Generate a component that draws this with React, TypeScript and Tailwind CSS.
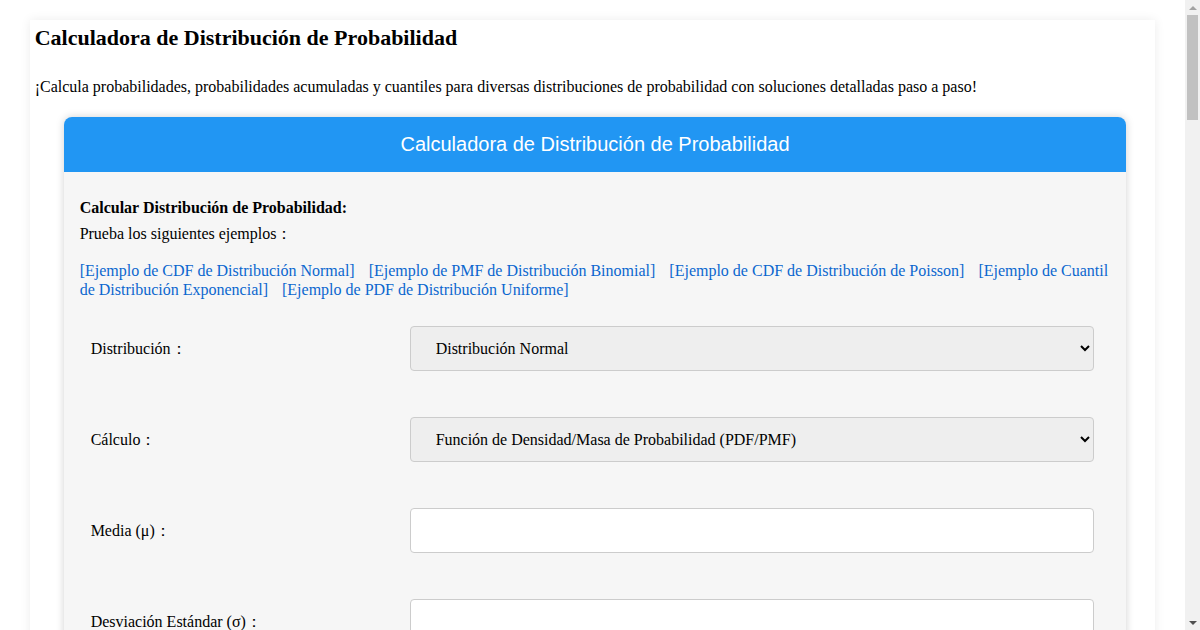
const examples = [
	"[Ejemplo de CDF de Distribución Normal]",
	"[Ejemplo de PMF de Distribución Binomial]",
	"[Ejemplo de CDF de Distribución de Poisson]",
	"[Ejemplo de Cuantil de Distribución Exponencial]",
	"[Ejemplo de PDF de Distribución Uniforme]",
];

const FieldRow = ({ label, children }: { label: string; children: React.ReactNode }) => {
	return (
		<div className="flex items-center">
			<label className="w-[330px] shrink-0 pl-[11px]">{label}</label>
			<div className="flex-1 mr-4">{children}</div>
		</div>
	);
};

const selectCls =
	"w-full h-[45px] pl-[21px] pr-1 bg-[#eeeeee] border border-[#cccccc] rounded-[4px] text-[16px] text-black outline-none";
const inputCls = "w-full h-[45px] px-3 bg-white border border-[#cccccc] rounded-[4px] text-[16px] outline-none";

const Scrollbar = () => {
	return (
		<div className="w-[15px] shrink-0 h-full bg-[#f1f1f1] flex flex-col items-center">
			<div className="h-[15px] flex items-center justify-center">
				<div className="w-0 h-0 border-l-[4px] border-r-[4px] border-b-[4px] border-l-transparent border-r-transparent border-b-[#a3a3a3]" />
			</div>
			<div className="w-[11px] h-[105px] bg-[#c1c1c1]" />
			<div className="flex-1" />
			<div className="h-[15px] flex items-center justify-center">
				<div className="w-0 h-0 border-l-[4px] border-r-[4px] border-t-[4px] border-l-transparent border-r-transparent border-t-[#505050]" />
			</div>
		</div>
	);
};

export default function App() {
	return (
		<div className="h-[630px] flex overflow-hidden bg-white font-['Liberation_Serif','Times_New_Roman',serif] text-[16px] leading-[1.15] text-black">
			<div className="flex-1 overflow-hidden">
				<div className="w-[95%] mx-auto mt-5 px-[5px] pt-[5px] pb-10 bg-white shadow-[0_0_10px_rgba(0,0,0,0.08)]">
					<h2 className="text-[22px] font-bold leading-[1.15]">Calculadora de Distribución de Probabilidad</h2>
					<p className="mt-[28px]">
						¡Calcula probabilidades, probabilidades acumuladas y cuantiles para diversas distribuciones de probabilidad con soluciones detalladas paso a paso!
					</p>

					<div className="mt-[20px] ml-[29px] mr-[24px] rounded-[8px] bg-[#f6f6f6] shadow-[0_0_8px_rgba(0,0,0,0.18)]">
						<div className="h-[55px] flex items-center justify-center rounded-t-[8px] bg-[#2196f3] text-white text-[20px] font-['Liberation_Sans',Arial,sans-serif]">
							Calculadora de Distribución de Probabilidad
						</div>

						<div className="pt-[27px] px-4 pb-10">
							<div className="font-bold">Calcular Distribución de Probabilidad:</div>
							<div className="mt-[8px]">Prueba los siguientes ejemplos：</div>
							<div className="mt-[18px] leading-[19px]">
								{examples.map((ex) => (
									<span key={ex}>
										<span className="text-[#0b67cf] mr-[10px] cursor-pointer">{ex}</span>{" "}
									</span>
								))}
							</div>

							<div className="mt-[27px] flex flex-col gap-[46px]">
								<FieldRow label="Distribución：">
									<select className={selectCls} defaultValue="normal">
										<option value="normal">Distribución Normal</option>
										<option value="binomial">Distribución Binomial</option>
										<option value="poisson">Distribución de Poisson</option>
										<option value="exponencial">Distribución Exponencial</option>
										<option value="uniforme">Distribución Uniforme</option>
									</select>
								</FieldRow>
								<FieldRow label="Cálculo：">
									<select className={selectCls} defaultValue="pdf">
										<option value="pdf">Función de Densidad/Masa de Probabilidad (PDF/PMF)</option>
										<option value="cdf">Función de Distribución Acumulada (CDF)</option>
										<option value="quantile">Cuantil</option>
									</select>
								</FieldRow>
								<FieldRow label="Media (μ)：">
									<input className={inputCls} />
								</FieldRow>
								<FieldRow label="Desviación Estándar (σ)：">
									<input className={inputCls} />
								</FieldRow>
								<FieldRow label="Valor (x)：">
									<input className={inputCls} />
								</FieldRow>
							</div>

							<div className="mt-8 flex justify-center">
								<button className="px-6 py-3 rounded-[4px] bg-[#2196f3] text-white font-['Liberation_Sans',Arial,sans-serif]">
									Calcular
								</button>
							</div>
						</div>
					</div>
				</div>
			</div>
			<Scrollbar />
		</div>
	);
}
